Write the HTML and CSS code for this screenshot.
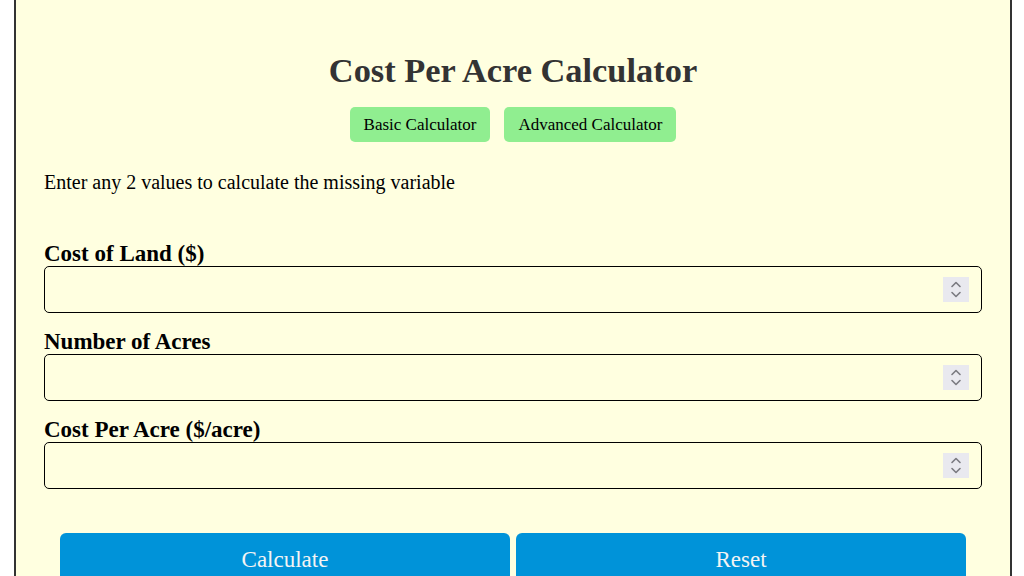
FILE: index.html
```html
<!DOCTYPE html>
<html>
<head>
<meta charset="utf-8">
<link rel="stylesheet" href="styles.css">
</head>
<body>
<div class="container">
  <h1 class="title">Cost Per Acre Calculator</h1>
  <div class="tabs">
    <button class="tab">Basic Calculator</button>
    <button class="tab">Advanced Calculator</button>
  </div>
  <p class="intro">Enter any 2 values to calculate the missing variable</p>
  <div class="fields">
    <div class="field">
      <label class="label">Cost of Land ($)</label>
      <div class="input-wrap">
        <input class="input" type="number">
        <span class="spin"><svg width="26" height="25" viewBox="0 0 26 25"><path d="M9 9.5 L13 5.5 L17 9.5 M9 15.5 L13 19.5 L17 15.5" fill="none" stroke="#7a7a80" stroke-width="1.6" stroke-linecap="round" stroke-linejoin="round"/></svg></span>
      </div>
    </div>
    <div class="field">
      <label class="label">Number of Acres</label>
      <div class="input-wrap">
        <input class="input" type="number">
        <span class="spin"><svg width="26" height="25" viewBox="0 0 26 25"><path d="M9 9.5 L13 5.5 L17 9.5 M9 15.5 L13 19.5 L17 15.5" fill="none" stroke="#7a7a80" stroke-width="1.6" stroke-linecap="round" stroke-linejoin="round"/></svg></span>
      </div>
    </div>
    <div class="field">
      <label class="label">Cost Per Acre ($/acre)</label>
      <div class="input-wrap">
        <input class="input" type="number">
        <span class="spin"><svg width="26" height="25" viewBox="0 0 26 25"><path d="M9 9.5 L13 5.5 L17 9.5 M9 15.5 L13 19.5 L17 15.5" fill="none" stroke="#7a7a80" stroke-width="1.6" stroke-linecap="round" stroke-linejoin="round"/></svg></span>
      </div>
    </div>
  </div>
  <div class="actions">
    <button class="action">Calculate</button>
    <button class="action">Reset</button>
  </div>
</div>
</body>
</html>
```
FILE: styles.css
```css
html, body {
  margin: 0;
  padding: 0;
  background: #ffffff;
  font-family: "Liberation Serif", "Times New Roman", serif;
}
.container {
  box-sizing: border-box;
  width: 998px;
  margin-left: 14px;
  border: 2px solid #333;
  border-top: none;
  background: #ffffe0;
  padding: 50px 28px 40px;
  min-height: 700px;
}
.title {
  margin: 0;
  text-align: center;
  font-size: 34.4px;
  font-weight: bold;
  color: #333;
  line-height: 40px;
}
.tabs {
  display: flex;
  justify-content: center;
  gap: 14px;
  margin-top: 17px;
}
.tab {
  font-family: "Liberation Serif", serif;
  font-size: 17px;
  background: #90ee90;
  color: #000;
  border: none;
  border-radius: 5px;
  padding: 0 14px;
  height: 35px;
}
.intro {
  margin: 28px 0 0;
  font-size: 20px;
  line-height: 24px;
  color: #000;
}
.fields {
  margin-top: 48px;
  display: flex;
  flex-direction: column;
  gap: 17px;
}
.field {
  display: flex;
  flex-direction: column;
}
.label {
  font-size: 23px;
  font-weight: bold;
  line-height: 24px;
  color: #000;
}
.input-wrap {
  position: relative;
  display: flex;
}
.input {
  flex: 1;
  box-sizing: border-box;
  height: 47px;
  margin: 0;
  border: 1px solid #000;
  border-radius: 5px;
  background: transparent;
  padding: 0 12px;
  font-size: 16px;
}
.input::-webkit-inner-spin-button,
.input::-webkit-outer-spin-button {
  -webkit-appearance: none;
  margin: 0;
}
.spin {
  position: absolute;
  right: 13px;
  top: 11px;
  width: 26px;
  height: 25px;
  background: #e9e9ef;
  display: flex;
}
.actions {
  display: flex;
  gap: 6px;
  padding: 0 16px;
  margin-top: 44px;
}
.action {
  flex: 1;
  font-family: "Liberation Serif", serif;
  font-size: 23px;
  background: #0093d9;
  color: #f4f4f4;
  border: none;
  border-radius: 6px;
  height: 54px;
  padding: 0;
}
```
